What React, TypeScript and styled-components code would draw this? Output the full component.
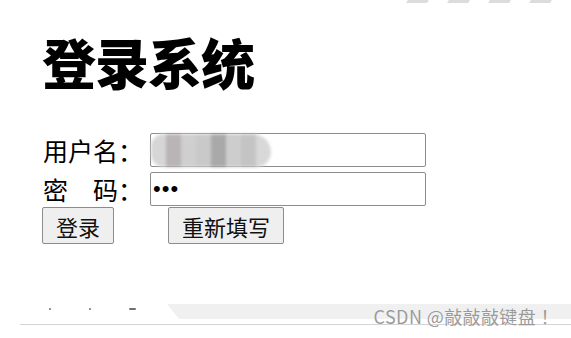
import React from 'react';
import styled, { createGlobalStyle } from 'styled-components';

const GlobalStyle = createGlobalStyle`
  html, body {
    margin: 0;
    padding: 0;
    background: #ffffff;
  }
  body {
    font-family: 'Noto Sans CJK SC', 'Noto Sans', sans-serif;
    color: #000000;
  }
`;

const mosaic = ['#d6d6d6', '#b9b4b5', '#cfcfcf', '#c9c9c9', '#a9a9a9', '#cdcdcd', '#c4c4c4', '#d8d8d8'];

export default function App() {
  return (
    <Page>
      <GlobalStyle />
      <TopMarks>
        <Mark />
        <Mark />
        <Mark />
        <Mark />
      </TopMarks>

      <Main>
        <Title>登录系统</Title>

        <Form>
          <FieldGrid>
            <Label>用户名：</Label>
            <InputWrap>
              <TextInput type="text" defaultValue="" />
              <Mosaic>
                {mosaic.map((c, i) => (
                  <Tile key={i} style={{ background: c }} />
                ))}
              </Mosaic>
            </InputWrap>

            <Label>密　码：</Label>
            <InputWrap>
              <TextInput type="password" defaultValue="123" />
            </InputWrap>
          </FieldGrid>

          <ButtonRow>
            <Button type="submit">登录</Button>
            <Button type="reset">重新填写</Button>
          </ButtonRow>
        </Form>
      </Main>

      <Footer>
        <Strip>
          <Specks>
            <Speck $w={2} />
            <Speck $w={2} />
            <Speck $w={7} />
          </Specks>
          <Band>
            <Speck $w={7} />
          </Band>
        </Strip>
        <Rule />
        <Watermark>CSDN @敲敲敲键盘 ！</Watermark>
      </Footer>
    </Page>
  );
}

const Page = styled.div`
  position: relative;
  width: 571px;
  height: 338px;
  overflow: hidden;
  display: flex;
  flex-direction: column;
`;

const TopMarks = styled.div`
  display: flex;
  justify-content: flex-end;
  gap: 20px;
  height: 4px;
  padding-right: 20px;
`;

const Mark = styled.span`
  width: 21px;
  height: 3px;
  background: #dcdcdc;
  transform: skewX(-30deg);
`;

const Main = styled.main`
  padding-left: 42px;
`;

const Title = styled.h1`
  margin: 31px 0 0;
  font-size: 54px;
  line-height: 54px;
  font-weight: 900;
  letter-spacing: -1px;
`;

const Form = styled.form`
  margin-top: 44px;
`;

const FieldGrid = styled.div`
  display: grid;
  grid-template-columns: 108px 276px;
  row-gap: 5px;
  align-items: center;
`;

const Label = styled.label`
  font-size: 25px;
  line-height: 34px;
  white-space: nowrap;
  padding-left: 1px;
`;

const InputWrap = styled.div`
  position: relative;
  height: 34px;
`;

const TextInput = styled.input`
  box-sizing: border-box;
  width: 100%;
  height: 34px;
  margin: 0;
  padding: 0 2px;
  border: 1px solid #8d8d8d;
  border-radius: 2px;
  font-size: 22px;
  letter-spacing: 1px;
  font-family: 'Liberation Sans', sans-serif;
  background: #ffffff;
  outline: none;
`;

const Mosaic = styled.div`
  position: absolute;
  left: 1px;
  top: 1px;
  width: 120px;
  height: 33px;
  display: flex;
  border-radius: 14px 20px 16px 14px;
  overflow: hidden;
  filter: blur(1.5px);
`;

const Tile = styled.span`
  flex: 1;
`;

const ButtonRow = styled.div`
  display: flex;
  align-items: flex-end;
  gap: 54px;
  margin-top: 1px;
`;

const Button = styled.button`
  height: 37px;
  margin: 0;
  padding: 0 13px;
  font-family: 'Noto Sans CJK SC', sans-serif;
  font-size: 22px;
  line-height: 1;
  color: #111111;
  background: #efefef;
  border: 1px solid #8c8c8c;
  border-radius: 2px;
`;

const Footer = styled.footer`
  position: relative;
  margin-top: auto;
  height: 34px;
`;

const Strip = styled.div`
  display: flex;
  height: 15px;
`;

const Specks = styled.div`
  display: flex;
  gap: 38px;
  width: 167px;
  padding: 4px 0 0 49px;
  box-sizing: border-box;
`;

const Speck = styled.span<{ $w: number }>`
  width: ${(p) => p.$w}px;
  height: 2px;
  background: #707070;
  border-radius: 1px;
`;

const Band = styled.div`
  flex: 1;
  padding: 3px 0 0 21px;
  background: #f0f0f0;
  clip-path: polygon(0 0, 100% 0, 100% 100%, 12px 100%);
`;

const Rule = styled.div`
  margin: 5px 0 0 20px;
  height: 1px;
  background: #d4d4d4;
`;

const Watermark = styled.div`
  position: absolute;
  right: 12px;
  top: 0;
  font-family: 'Noto Sans CJK SC', sans-serif;
  font-size: 18px;
  line-height: 24px;
  letter-spacing: 0.4px;
  color: #9a9a9a;
  text-shadow: 0 0 1px #ffffff;
`;
